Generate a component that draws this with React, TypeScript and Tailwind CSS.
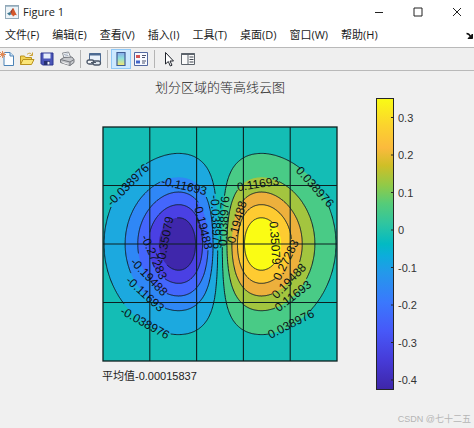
import type { ReactNode } from "react";

interface Band {
  level: number;
  negative: string;
  positive: string;
}

interface ContourLabel {
  text: string;
  x: number;
  y: number;
  angle: number;
}

const CENTER = 118;
const SCALE = 58.5;

const bands: Band[] = [
  { level: 0.038976, negative: "#1ca9df", positive: "#49cb86" },
  { level: 0.11693, negative: "#2f87f6", positive: "#a3c53f" },
  { level: 0.19488, negative: "#4466fd", positive: "#edb03c" },
  { level: 0.27283, negative: "#4a40e4", positive: "#fecb31" },
  { level: 0.35079, negative: "#3f27ab", positive: "#fafc14" },
];

const labels: ContourLabel[] = [
  { text: "-0.038976", x: 26, y: 59, angle: -45 },
  { text: "-0.11693", x: 82, y: 60, angle: 13 },
  { text: "-0.19488", x: 101, y: 100, angle: 76 },
  { text: "-0.038976", x: 114, y: 96, angle: 87 },
  { text: "-0.35079", x: 63, y: 114, angle: -79 },
  { text: "-0.27283", x: 52, y: 131, angle: 66 },
  { text: "-0.19488", x: 47, y: 151, angle: 46 },
  { text: "-0.11693", x: 43, y: 168, angle: 42 },
  { text: "-0.038976", x: 43, y: 197, angle: 29 },
  { text: "0.038976", x: 213, y: 61, angle: 48 },
  { text: "0.11693", x: 156, y: 58, angle: -9 },
  { text: "0.19488", x: 135, y: 96, angle: -74 },
  { text: "0.038976", x: 122, y: 95, angle: -87 },
  { text: "0.35079", x: 173, y: 117, angle: 86 },
  { text: "0.27283", x: 184, y: 134, angle: -64 },
  { text: "0.19488", x: 187, y: 155, angle: -46 },
  { text: "0.11693", x: 191, y: 170, angle: -38 },
  { text: "0.038976", x: 189, y: 198, angle: -27 },
];

const gridX = [47.8, 94.6, 141.4, 188.2];
const gridY = [59.5, 118, 176.5];

const profile = (x: number) => x * Math.exp(-x * x);

// Finds where the profile crosses a level between lo and hi
const crossing = (level: number, lo: number, hi: number) => {
  const rising = profile(lo) < level;
  for (let i = 0; i < 50; i++) {
    const mid = (lo + hi) / 2;
    if (profile(mid) < level === rising) lo = mid;
    else hi = mid;
  }
  return lo;
};

// Closed contour of z = x * exp(-x^2 - y^2)
const contour = (level: number, sign: number) => {
  const peak = Math.SQRT1_2;
  const x0 = crossing(level, 0, peak);
  const x1 = crossing(level, peak, 3);
  const points: [number, number][] = [];
  for (let i = 0; i <= 400; i++) {
    const t = (i / 400) * 2 * Math.PI;
    const x = (x0 + x1) / 2 - ((x1 - x0) / 2) * Math.cos(t);
    const h = Math.sqrt(Math.max(0, Math.log(profile(x) / level)));
    const y = t < Math.PI ? -h : h;
    points.push([CENTER + sign * x * SCALE, CENTER + y * SCALE]);
  }
  return points;
};

const insideLabel = (px: number, py: number, label: ContourLabel) => {
  const a = (label.angle * Math.PI) / 180;
  const dx = px - label.x;
  const dy = py - label.y;
  const along = dx * Math.cos(a) + dy * Math.sin(a);
  const across = dy * Math.cos(a) - dx * Math.sin(a);
  return Math.abs(along) < label.text.length * 3 && Math.abs(across) < 9;
};

const fillPath = (points: [number, number][]) =>
  "M" + points.map(([x, y]) => `${x.toFixed(1)} ${y.toFixed(1)}`).join("L") + "Z";

// The line breaks wherever it runs under its own label
const linePath = (points: [number, number][], text: string) => {
  const own = labels.filter((l) => l.text === text);
  let path = "";
  let pen = false;
  points.forEach(([x, y]) => {
    if (own.some((l) => insideLabel(x, y, l))) {
      pen = false;
      return;
    }
    path += `${pen ? "L" : "M"}${x.toFixed(1)} ${y.toFixed(1)}`;
    pen = true;
  });
  return path;
};

const ContourPlot = () => {
  const shapes = bands.flatMap((band) => [
    {
      text: `-${band.level}`,
      fill: band.negative,
      points: contour(band.level, -1),
    },
    {
      text: `${band.level}`,
      fill: band.positive,
      points: contour(band.level, 1),
    },
  ]);

  return (
    <svg viewBox="0 0 236 236" className="block w-full" role="img" aria-label="等高线云图">
      <rect x="1" y="1" width="234" height="234" fill="#14bdb5" />
      {shapes.map((s) => (
        <path key={s.text} d={fillPath(s.points)} fill={s.fill} />
      ))}
      <g fill="none" stroke="#10202a" strokeWidth="1">
        {shapes.map((s) => (
          <path key={s.text} d={linePath(s.points, s.text)} />
        ))}
      </g>
      <g stroke="#0d2020" strokeWidth="1.1">
        {gridX.map((x) => (
          <line key={x} x1={x} x2={x} y1="1" y2="235" />
        ))}
        {gridY.map((y) => (
          <line key={y} x1="1" x2="235" y1={y} y2={y} />
        ))}
        <rect x="1" y="1" width="234" height="234" fill="none" strokeWidth="1.3" />
      </g>
      <g fontSize="12" fill="#0c1216" textAnchor="middle">
        {labels.map((l) => (
          <text
            key={`${l.x}-${l.y}`}
            transform={`translate(${l.x} ${l.y}) rotate(${l.angle})`}
            y="4"
          >
            {l.text}
          </text>
        ))}
      </g>
    </svg>
  );
};

const ticks = ["0.3", "0.2", "0.1", "0", "-0.1", "-0.2", "-0.3", "-0.4"];

const ColorBar = () => (
  <svg viewBox="0 0 60 296" className="block w-[60px]" role="img" aria-label="色标">
    <defs>
      <linearGradient id="parula" x1="0" y1="1" x2="0" y2="0">
        <stop offset="0" stopColor="#3e26a8" />
        <stop offset="0.1" stopColor="#463bd8" />
        <stop offset="0.2" stopColor="#4758f8" />
        <stop offset="0.3" stopColor="#3a78fd" />
        <stop offset="0.4" stopColor="#2498eb" />
        <stop offset="0.46" stopColor="#0caddb" />
        <stop offset="0.5" stopColor="#02bac3" />
        <stop offset="0.57" stopColor="#2fc5a0" />
        <stop offset="0.64" stopColor="#56cc78" />
        <stop offset="0.7" stopColor="#8fca49" />
        <stop offset="0.77" stopColor="#cfbf27" />
        <stop offset="0.83" stopColor="#fbba3d" />
        <stop offset="0.91" stopColor="#fbd42d" />
        <stop offset="1" stopColor="#f9fb15" />
      </linearGradient>
    </defs>
    <rect x="0.5" y="2.5" width="17" height="291" fill="url(#parula)" stroke="#262626" />
    {ticks.map((tick, i) => (
      <g key={tick}>
        <line x1="15" x2="17" y1={21.5 + i * 37.5} y2={21.5 + i * 37.5} stroke="#262626" />
        <text x="22" y={25.5 + i * 37.5} fontSize="11" fill="#333">
          {tick}
        </text>
      </g>
    ))}
  </svg>
);

const menus = [
  "文件(F)",
  "编辑(E)",
  "查看(V)",
  "插入(I)",
  "工具(T)",
  "桌面(D)",
  "窗口(W)",
  "帮助(H)",
];

interface ToolButtonProps {
  label: string;
  active?: boolean;
  children: ReactNode;
}

const ToolButton = ({ label, active, children }: ToolButtonProps) => (
  <button
    type="button"
    aria-label={label}
    className={
      active
        ? "flex h-5 w-5 items-center justify-center border border-[#90c8f6] bg-[#cce8ff]"
        : "flex h-5 w-5 items-center justify-center"
    }
  >
    <svg viewBox="0 0 16 16" className="h-4 w-4 shrink-0" fill="none">
      {children}
    </svg>
  </button>
);

const Separator = () => <div className="mx-[3px] h-[18px] w-px bg-[#b4b4b4]" />;

const Toolbar = () => (
  <div className="flex h-6 items-center border-y border-[#b9b9b9] bg-[#efefef]">
    <div className="-ml-[3px] flex items-center">
      <ToolButton label="新建图窗">
        <path d="M5 1.5h6l3.5 3.5v9.5H5z" fill="#fbfdff" stroke="#4c83b6" />
        <path d="M11 1.5V5h3.5" fill="#cfe3f5" stroke="#4c83b6" />
        <path d="M3.5 0v7M0 3.5h7M1 1l5 5M6 1L1 6" stroke="#e28a55" />
      </ToolButton>
      <ToolButton label="打开文件">
        <path d="M1.5 13.5V5h4l1 1.5h6v2" fill="#f2d254" stroke="#b9921f" />
        <path d="M1.5 13.5L4 8.5h11l-2.5 5z" fill="#fbe679" stroke="#b9921f" />
        <path d="M8 3.5c2-2 4-1.5 5 .5M13.5 1.5V4.5H10.5" stroke="#cba236" />
      </ToolButton>
      <ToolButton label="保存图窗">
        <path d="M2 2h12v12H3.5L2 12.5z" fill="#4a55b8" stroke="#2c3690" />
        <path d="M4.5 2.5h7v5h-7z" fill="#e4ecfb" />
        <path d="M5 10h6v4H5z" fill="#26306f" />
        <path d="M8.5 10.8h2v2.7h-2z" fill="#f2f4ff" />
      </ToolButton>
      <ToolButton label="打印图窗">
        <path d="M5 7L3.5 2l6-1L12 7z" fill="#fff" stroke="#8b8f96" />
        <path d="M5 3.5l4-.7M5.5 5l4-.6" stroke="#a7b2c2" />
        <path d="M1.5 8.5L5 6.5l8-.5 2 2.5v3l-4 3-9.5-3z" fill="#c6c8cc" stroke="#74777d" />
        <path d="M1.5 8.5l9.5 2.5 4-2.5M11 11v3.5" stroke="#74777d" />
        <path d="M3.5 11.5l6 1.8" stroke="#f6f6f6" />
      </ToolButton>
    </div>
    <Separator />
    <ToolButton label="链接绘图">
      <path d="M3.5 2.5h11v8h-11z" fill="#eaf1fa" stroke="#4d6a92" />
      <path d="M3.5 3.5h11" stroke="#4d6a92" strokeWidth="2" />
      <rect x="1" y="9" width="7" height="4" rx="2" fill="#f4f6f9" stroke="#4c5768" strokeWidth="1.3" />
      <rect x="7" y="10" width="7.5" height="4" rx="2" fill="#dfe6ee" stroke="#4c5768" strokeWidth="1.3" />
      <path d="M5 11.5h5" stroke="#4c5768" />
    </ToolButton>
    <Separator />
    <ToolButton label="插入颜色栏" active>
      <defs>
        <linearGradient id="colorbar-icon" x1="0" y1="0" x2="0" y2="1">
          <stop offset="0" stopColor="#86a8ef" />
          <stop offset="0.45" stopColor="#8de0da" />
          <stop offset="1" stopColor="#f6e66c" />
        </linearGradient>
      </defs>
      <path d="M4 1.5h8v13H4z" fill="url(#colorbar-icon)" stroke="#3f5d94" strokeWidth="1.2" />
    </ToolButton>
    <ToolButton label="插入图例">
      <path d="M1.5 1.5h13v13h-13z" fill="#f8faff" stroke="#5268a0" />
      <path d="M3 4h4v3H3z" fill="#d35555" />
      <path d="M3 9.5h4v3H3z" fill="#4466c8" />
      <path d="M9 4.5h4M9 6.5h3M9 10h4M9 12h3" stroke="#4d5470" />
    </ToolButton>
    <Separator />
    <ToolButton label="编辑绘图">
      <path
        d="M5.5 1.5v11.5l2.8-2.5 2 4.5 1.7-.8-2-4.2h3.500z"
        fill="#fff"
        stroke="#20242c"
      />
    </ToolButton>
    <ToolButton label="属性检查器">
      <path d="M1.5 2.5h13v11h-13z" fill="#fafafa" stroke="#5d646c" />
      <path d="M1.5 3h13" stroke="#5d646c" strokeWidth="2" />
      <path d="M8 3v10.5" stroke="#5d646c" />
      <path d="M9.5 6h4M9.5 8.5h4M9.5 11h4" stroke="#3e454e" strokeWidth="1.2" />
    </ToolButton>
  </div>
);

const TitleBar = () => (
  <header className="flex h-6 items-center pr-3 pl-[5px]">
    <svg viewBox="0 0 14 14" className="h-3.5 w-3.5" aria-hidden="true">
      <rect x="0.5" y="0.5" width="13" height="13" fill="#edf3f7" stroke="#92a9b8" />
      <path d="M1 1.5h12" stroke="#a9bfce" />
      <path d="M2 8.5l3-1.5 1.5 2L4.5 10.5z" fill="#3f7890" />
      <path d="M5 7l3-4 1 2-2.5 4z" fill="#8e3a2c" />
      <path d="M8 3c1.5 1.5 2.5 5 4 7.5-1.5-.8-2.5-.5-4 1.2-.5-1.5-1-2-2-2.2z" fill="#d4582b" />
    </svg>
    <h1 className="ml-1 text-[11px] text-[#222]">Figure 1</h1>
    <div className="ml-auto flex items-center gap-[29px] text-[#222]">
      <button type="button" aria-label="最小化">
        <svg viewBox="0 0 10 10" className="block h-2.5 w-2.5" fill="none" stroke="currentColor">
          <path d="M1 5.5h8" />
        </svg>
      </button>
      <button type="button" aria-label="最大化">
        <svg viewBox="0 0 10 10" className="block h-2.5 w-2.5" fill="none" stroke="currentColor">
          <path d="M1 1h8v8H1z" />
        </svg>
      </button>
      <button type="button" aria-label="关闭">
        <svg viewBox="0 0 10 10" className="block h-2.5 w-2.5" fill="none" stroke="currentColor">
          <path d="M1 1l8 8M9 1L1 9" />
        </svg>
      </button>
    </div>
  </header>
);

const MenuBar = () => (
  <nav className="flex h-[23px] items-center gap-[13px] pl-[5px] text-[11px] text-[#1a1a1a]">
    {menus.map((menu) => (
      <button key={menu} type="button" className="whitespace-nowrap">
        {menu}
      </button>
    ))}
    <button type="button" aria-label="停靠图窗" className="ml-auto">
      <svg viewBox="0 0 8 8" className="block h-2 w-2" fill="none" stroke="#111">
        <path d="M0.5 1.5c2 0 3 1 4 3" strokeWidth="1.5" />
        <path d="M2 6.5h4.5V2z" fill="#111" />
      </svg>
    </button>
  </nav>
);

const App = () => {
  return (
    <div className="flex min-h-screen flex-col bg-[#f0f0f0] font-['Open_Sans','Noto_Sans_CJK_SC',sans-serif]">
      <div className="bg-white">
        <TitleBar />
        <MenuBar />
      </div>
      <Toolbar />
      <main className="flex pl-[102px] font-['Liberation_Sans','Noto_Sans_CJK_SC',sans-serif]">
        <figure className="flex-1 pt-2">
          <h2 className="text-center text-[13px] leading-[18px] font-light text-[#222]">
            划分区域的等高线云图
          </h2>
          <div className="mt-[29px]">
            <ContourPlot />
          </div>
          <figcaption className="mt-1.5 text-[11px] leading-4 text-[#222]">
            平均值-0.00015837
          </figcaption>
        </figure>
        <div className="ml-[38px] w-[98px] pt-[25px]">
          <ColorBar />
        </div>
      </main>
      <footer className="mt-auto pr-[3px] pb-[3px] text-right font-['Liberation_Sans','Noto_Sans_CJK_SC',sans-serif] text-[9px] leading-3 text-[#b5b5b5]">
        CSDN @七十二五
      </footer>
    </div>
  );
};

export default App;
